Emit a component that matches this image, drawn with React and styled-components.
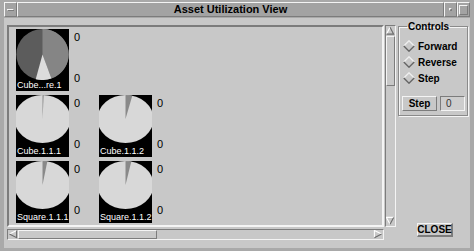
import React from 'react'
import styled, { createGlobalStyle, css } from 'styled-components'

const Global = createGlobalStyle`
    html, body {
        margin: 0;
        padding: 0;
        background: #aaaaaa;
    }
    * {
        box-sizing: border-box;
    }
`

const LIGHT = '#f4f4f4'
const DARK = '#7c7c7c'
const FACE = '#c8c8c8'

const raised = css`
    border-style: solid;
    border-color: ${LIGHT} ${DARK} ${DARK} ${LIGHT};
`
const sunken = css`
    border-style: solid;
    border-color: ${DARK} ${LIGHT} ${LIGHT} ${DARK};
`

const Window = styled.div`
    width: 474px;
    height: 251px;
    padding: 2px 4px 3px 4px;
    background: #a9a9a9;
    display: flex;
    flex-direction: column;
    font-family: "Liberation Sans", Arial, sans-serif;
    color: #000;
`
const TitleBar = styled.div`
    height: 15px;
    display: flex;
`
const FrameButton = styled.div`
    width: 13px;
    border-width: 1px;
    ${raised};
    background: #a3a3a3;
    display: flex;
    align-items: center;
    justify-content: center;
`
const Title = styled.div`
    flex: 1;
    border-width: 1px;
    ${raised};
    background: #a3a3a3;
    font-size: 11px;
    font-weight: bold;
    line-height: 13px;
    text-align: center;
`
const Dash = styled.div`
    width: 7px;
    height: 2px;
    border-width: 1px;
    ${raised};
`
const Dot = styled.div`
    width: 3px;
    height: 3px;
    border-width: 1px;
    ${raised};
`
const Box = styled.div`
    width: 9px;
    height: 10px;
    border-width: 1px;
    ${raised};
`
const Body = styled.div`
    flex: 1;
    margin-top: 1px;
    background: ${FACE};
    display: flex;
    gap: 2px;
    padding: 7px 2px 8px 3px;
`
const Scrolled = styled.div`
    display: grid;
    grid-template-columns: 377px 11px;
    grid-template-rows: 202px 11px;
    column-gap: 1px;
    row-gap: 2px;
`
const View = styled.div`
    border-width: 2px;
    ${sunken};
    overflow: hidden;
    padding: 2px 0 0 7px;
`
const Rows = styled.div`
    display: flex;
    flex-direction: column;
    gap: 4px;
`
const Row = styled.div`
    display: flex;
`
const Cell = styled.div`
    width: 83px;
    height: 62px;
    display: flex;
`
const PieBox = styled.div`
    width: 53px;
    height: 62px;
    background: #000;
    display: flex;
    flex-direction: column;
`
const PieLabel = styled.div`
    height: 11px;
    padding-left: 1px;
    color: #fff;
    font-size: 9px;
    line-height: 11px;
    white-space: nowrap;
`
const Values = styled.div`
    display: flex;
    flex-direction: column;
    justify-content: space-between;
    padding: 2px 0 7px 5px;
    font-size: 11px;
    line-height: 12px;
    color: #000;
`
const ScrollBar = styled.div`
    border-width: 1px;
    ${sunken};
    display: flex;
    flex-direction: ${p => (p.$vertical ? 'column' : 'row')};
`
const Thumb = styled.div`
    flex: none;
    ${p => (p.$vertical ? `height: ${p.$size}px;` : `width: ${p.$size}px;`)}
    border-width: 1px;
    ${raised};
`
const Track = styled.div`
    flex: 1;
`
const ArrowBox = styled.svg`
    flex: none;
    display: block;
`
const Side = styled.div`
    flex: 1;
    display: flex;
    flex-direction: column;
`
const Group = styled.fieldset`
    margin: -4px 0 0 0;
    padding: 6px 2px 4px 3px;
    border: 1px solid #8a8a8a;
    box-shadow: 1px 1px 0 ${LIGHT}, inset 1px 1px 0 ${LIGHT};
    display: flex;
    flex-direction: column;
    min-width: 0;
`
const Legend = styled.legend`
    margin-left: 5px;
    padding: 0 1px;
    font-size: 10px;
    font-weight: bold;
    line-height: 11px;
`
const Radio = styled.div`
    height: 16px;
    display: flex;
    align-items: center;
    gap: 3px;
    padding-left: 1px;
    font-size: 10px;
    font-weight: bold;
`
const StepRow = styled.div`
    margin-top: 10px;
    display: flex;
    gap: 3px;
    height: 15px;
`
const Button = styled.div`
    width: ${p => p.$width}px;
    border-width: 1px;
    ${raised};
    display: flex;
    align-items: center;
    justify-content: center;
    font-size: 10px;
    font-weight: bold;
`
const Field = styled.div`
    width: 25px;
    border-width: 1px;
    ${sunken};
    background: #cdcdcd;
    padding-left: 5px;
    font-size: 10px;
    line-height: 13px;
    color: #333;
`
const CloseButton = styled(Button)`
    height: 14px;
    margin: auto 0 3px 19px;
    border-width: 1px 2px 2px 1px;
`

function Arrow({ dir }) {
    const shapes = {
        up: { light: '0.5,8.5 4.5,0.8', dark: '4.5,0.8 8.5,8.5 0.5,8.5' },
        down: { light: '8.5,1 0.5,1 4.5,8.5', dark: '4.5,8.5 8.5,1' },
        left: { light: '9,0.5 1,4.5', dark: '1,4.5 9,8.5 9,0.5' },
        right: { light: '1,8.5 1,0.5 9,4.5', dark: '9,4.5 1,8.5' },
    }
    const s = shapes[dir]
    const vertical = dir === 'up' || dir === 'down'
    return (
        <ArrowBox width={vertical ? 9 : 10} height={vertical ? 10 : 9} viewBox="0 0 10 10">
            <polyline points={s.light} fill="none" stroke="#fff" strokeWidth="1.2" />
            <polyline points={s.dark} fill="none" stroke="#6a6a6a" strokeWidth="1.2" />
        </ArrowBox>
    )
}

function Diamond() {
    return (
        <svg width="12" height="12" viewBox="0 0 12 12">
            <polyline points="0.8,6 6,0.8 11.2,6" fill="none" stroke="#eeeeee" strokeWidth="1.4" />
            <polyline points="0.8,6 6,11.2 11.2,6" fill="none" stroke="#666" strokeWidth="1.4" />
        </svg>
    )
}

function Pie({ big, slices, base }) {
    const rx = big ? 26.2 : 28
    const ry = big ? 25.5 : 24
    const cx = 26.5
    const cy = big ? 25.5 : 24
    const pt = a => {
        const r = (a * Math.PI) / 180
        return [cx + rx * Math.sin(r), cy - ry * Math.cos(r)]
    }
    return (
        <svg width="53" height="51" viewBox="0 0 53 51">
            <ellipse cx={cx} cy={cy} rx={rx} ry={ry} fill={base} />
            {slices.map((s, i) => {
                const [x1, y1] = pt(s.from)
                const [x2, y2] = pt(s.to)
                const large = s.to - s.from > 180 ? 1 : 0
                return (
                    <path
                        key={i}
                        d={`M${cx} ${cy} L${x1} ${y1} A${rx} ${ry} 0 ${large} 1 ${x2} ${y2} Z`}
                        fill={s.color}
                    />
                )
            })}
        </svg>
    )
}

const PALE = '#d8d8d8'
const WEDGE = '#898989'

const rows = [
    [
        {
            name: 'Cube...re.1',
            big: true,
            base: '#5c5c5c',
            slices: [
                { from: 0, to: 160, color: '#858585' },
                { from: 160, to: 195, color: '#dcdcdc' },
            ],
        },
    ],
    [
        { name: 'Cube.1.1.1', base: PALE, slices: [{ from: 0, to: 2.5, color: WEDGE }] },
        { name: 'Cube.1.1.2', base: PALE, slices: [{ from: 0, to: 14, color: WEDGE }] },
    ],
    [
        { name: 'Square.1.1.1', base: PALE, slices: [{ from: 0, to: 10, color: WEDGE }] },
        { name: 'Square.1.1.2', base: PALE, slices: [{ from: 0, to: 12, color: WEDGE }] },
    ],
]

function App() {
    return (
        <Window>
            <Global />
            <TitleBar>
                <FrameButton><Dash /></FrameButton>
                <Title>Asset Utilization View</Title>
                <FrameButton><Dot /></FrameButton>
                <FrameButton><Box /></FrameButton>
            </TitleBar>
            <Body>
                <Scrolled>
                    <View>
                        <Rows>
                            {rows.map((row, r) => (
                                <Row key={r}>
                                    {row.map(item => (
                                        <Cell key={item.name}>
                                            <PieBox>
                                                <Pie big={item.big} base={item.base} slices={item.slices} />
                                                <PieLabel>{item.name}</PieLabel>
                                            </PieBox>
                                            <Values>
                                                <span>0</span>
                                                <span>0</span>
                                            </Values>
                                        </Cell>
                                    ))}
                                </Row>
                            ))}
                        </Rows>
                    </View>
                    <ScrollBar $vertical>
                        <Arrow dir="up" />
                        <Thumb $vertical $size={50} />
                        <Track />
                        <Arrow dir="down" />
                    </ScrollBar>
                    <ScrollBar>
                        <Arrow dir="left" />
                        <Thumb $size={139} />
                        <Track />
                        <Arrow dir="right" />
                    </ScrollBar>
                </Scrolled>
                <Side>
                    <Group>
                        <Legend>Controls</Legend>
                        <Radio><Diamond />Forward</Radio>
                        <Radio><Diamond />Reverse</Radio>
                        <Radio><Diamond />Step</Radio>
                        <StepRow>
                            <Button $width={35}>Step</Button>
                            <Field>0</Field>
                        </StepRow>
                    </Group>
                    <CloseButton $width={36}>CLOSE</CloseButton>
                </Side>
            </Body>
        </Window>
    )
}

export default App
